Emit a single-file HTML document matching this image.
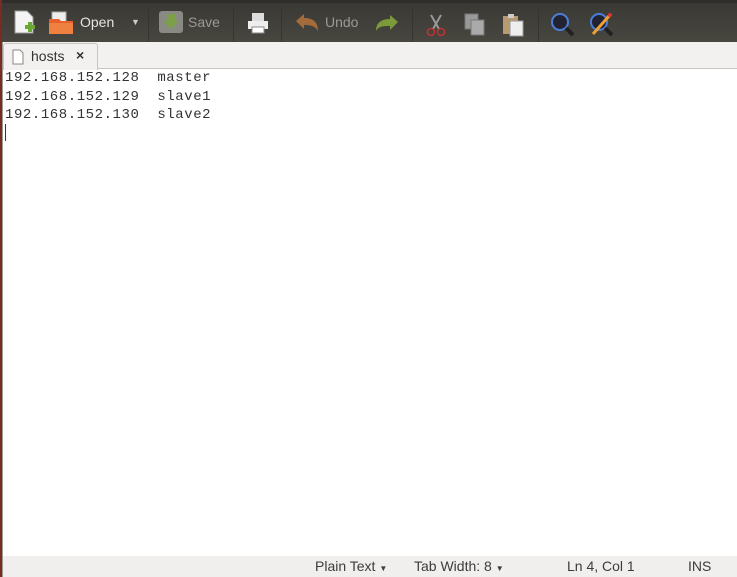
<!DOCTYPE html>
<html><head><style>
*{margin:0;padding:0;box-sizing:border-box}
body{width:737px;height:577px;overflow:hidden;position:relative;background:#fff;font-family:"Liberation Sans",sans-serif}
#edge{position:absolute;left:0;top:0;width:2px;height:577px;background:#7b2b22;z-index:5}
#edge2{position:absolute;left:2px;top:42px;width:1px;height:535px;background:#9a9a96;z-index:5}
#tb{position:absolute;left:0;top:0;width:737px;height:42px;background:linear-gradient(#3a3935,#47463f);border-top:3px solid #2e2d2a}
.t{position:absolute;color:#9c9a92;font-size:14px;top:11px}
.sep{position:absolute;top:4px;width:1px;height:36px;background:#35342f}
#tabs{position:absolute;left:0;top:42px;width:737px;height:27px;background:#f2f1f0;border-bottom:1px solid #c8c6c2}
#tab{position:absolute;left:3px;top:1px;width:95px;height:27px;background:#f2f1f0;border:1px solid #c8c6c2;border-bottom:none;border-radius:3px 3px 0 0;font-size:14px;color:#333}
#txt{position:absolute;left:5px;top:69px;font-family:"Liberation Mono","DejaVu Sans Mono",monospace;font-size:14px;letter-spacing:0.56px;line-height:18.5px;color:#333;white-space:pre}
#cur{position:absolute;left:5px;top:124px;width:1px;height:17px;background:#333}
#sb{position:absolute;left:0;top:556px;width:737px;height:21px;background:#f0efed;font-size:14px;color:#3c3c3c}
#sb span{position:absolute;top:2px}
</style></head><body>
<div id="edge"></div><div id="edge2"></div>
<div id="tb">
<svg style="position:absolute;left:13px;top:6px" width="24" height="28"><path d="M2 2h12l6 6v16H2z" fill="#f4f4f4" stroke="#999"/><rect x="12" y="16" width="10" height="4" fill="#6aa832"/><rect x="15" y="13" width="4" height="10" fill="#6aa832"/></svg>
<svg style="position:absolute;left:48px;top:7px" width="26" height="26"><path d="M4 2h14v10H4z" fill="#eee" stroke="#aaa"/><path d="M1 9h10l2 2h12v13H1z" fill="#e8612c"/><path d="M1 13h24v11H1z" fill="#f08040"/></svg>
<div class="t" style="left:80px;color:#e6e4de">Open</div>
<div class="t" style="left:131px;font-size:9px;top:14px;color:#ccc">▼</div>
<div class="sep" style="left:148px"></div>
<svg style="position:absolute;left:158px;top:7px" width="26" height="24"><rect x="1" y="1" width="24" height="22" rx="3" fill="#8a8a84"/><path d="M9 4h8v7h4l-8 8-8-8h4z" fill="#7ca048"/></svg>
<div class="t" style="left:188px">Save</div>
<div class="sep" style="left:233px"></div>
<svg style="position:absolute;left:246px;top:8px" width="24" height="24"><rect x="6" y="2" width="12" height="8" fill="#ddd"/><rect x="2" y="10" width="20" height="8" fill="#eee"/><rect x="6" y="16" width="12" height="6" fill="#fff" stroke="#888"/></svg>
<div class="sep" style="left:281px"></div>
<svg style="position:absolute;left:294px;top:10px" width="26" height="20"><path d="M2 8l8-7v4c8 0 14 3 14 13c-3-5-7-6-14-6v4z" fill="#a36a3a"/></svg>
<div class="t" style="left:325px">Undo</div>
<svg style="position:absolute;left:374px;top:12px" width="26" height="18"><path d="M24 7l-8-7v4c-8 0-14 3-14 12c3-5 7-5 14-5v4z" fill="#7c9a3a"/></svg>
<div class="sep" style="left:412px"></div>
<svg style="position:absolute;left:426px;top:10px" width="20" height="24"><path d="M5 2l8 14M15 2l-8 14" stroke="#999" stroke-width="2"/><circle cx="5" cy="19" r="3.5" fill="none" stroke="#b33" stroke-width="1.6"/><circle cx="15" cy="19" r="3.5" fill="none" stroke="#b33" stroke-width="1.6"/></svg>
<svg style="position:absolute;left:464px;top:10px" width="22" height="24"><rect x="1" y="1" width="13" height="15" fill="#999" stroke="#777"/><rect x="7" y="7" width="13" height="15" fill="#aaa" stroke="#777"/></svg>
<svg style="position:absolute;left:502px;top:10px" width="22" height="24"><rect x="1" y="3" width="15" height="18" fill="#b89a70"/><rect x="6" y="1" width="6" height="4" fill="#ccc"/><rect x="8" y="8" width="13" height="15" fill="#eee" stroke="#999"/></svg>
<div class="sep" style="left:538px"></div>
<svg style="position:absolute;left:550px;top:9px" width="26" height="26"><circle cx="10" cy="10" r="8" fill="#223" stroke="#4a7fd8" stroke-width="2"/><path d="M16 16l7 7" stroke="#222" stroke-width="4"/></svg>
<svg style="position:absolute;left:589px;top:9px" width="26" height="26"><circle cx="10" cy="10" r="8" fill="#223" stroke="#4a7fd8" stroke-width="2"/><path d="M16 16l7 7" stroke="#222" stroke-width="4"/><path d="M4 22l16-18" stroke="#f0a030" stroke-width="3"/><circle cx="21" cy="3" r="2" fill="#d33"/></svg>
</div>
<div id="tabs"><div id="tab">
<svg style="position:absolute;left:8px;top:5px" width="12" height="16"><path d="M1 1h7l3 3v11H1z" fill="#fff" stroke="#888"/></svg>
<span style="position:absolute;left:27px;top:4px">hosts</span>
<span style="position:absolute;left:72px;top:3px;font-weight:bold">×</span>
</div></div>
<div id="txt">192.168.152.128  master
192.168.152.129  slave1
192.168.152.130  slave2</div>
<div id="cur"></div>
<div id="sb">
<span style="left:315px">Plain Text <small style="font-size:8px">▼</small></span>
<span style="left:414px">Tab Width: 8 <small style="font-size:8px">▼</small></span>
<span style="left:567px">Ln 4, Col 1</span>
<span style="left:688px">INS</span>
</div>
</body></html>
